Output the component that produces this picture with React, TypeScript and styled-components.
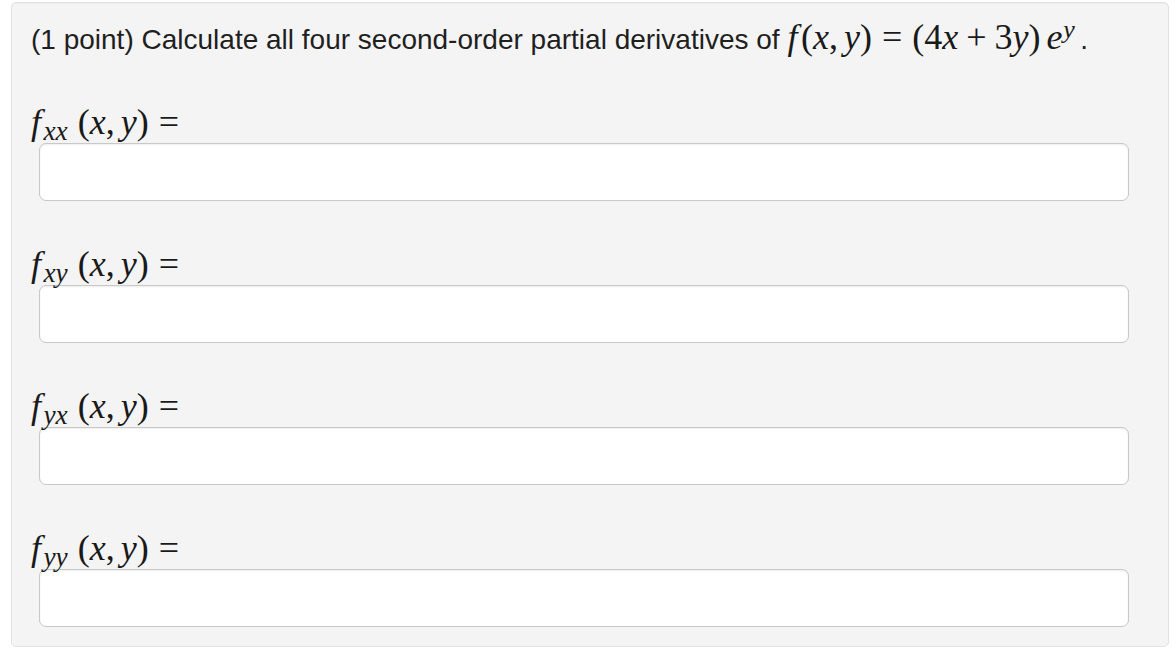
import React from "react";
import styled, { createGlobalStyle } from "styled-components";

const Global = createGlobalStyle`
  html, body { margin: 0; padding: 0; background: #ffffff; }
  body { font-family: "Liberation Sans", Arial, sans-serif; color: #1f1f1f; }
`;

const Page = styled.div`
  padding: 2px 7px 0 11px;
  width: 1158px;
`;

const Well = styled.div`
  box-sizing: border-box;
  width: 1158px;
  padding: 17px 19px 19px;
  background: #f4f4f4;
  border: 1px solid #e2e2e2;
  border-radius: 5px;
  box-shadow: inset 0 1px 1px rgba(0, 0, 0, 0.03);
`;

const Header = styled.div`
  height: 40px;
  line-height: 40px;
  font-size: 28px;
  margin-bottom: 46px;
  white-space: nowrap;
`;

const Math = styled.span`
  font-family: "Liberation Serif", "Times New Roman", serif;
  font-size: 36px;
  line-height: 0;
  color: #1a1a1a;
`;

const Mi = styled.i`
  font-style: italic;
`;

const Sub = styled.span`
  font-style: italic;
  font-size: 0.76em;
  line-height: 0;
  vertical-align: -0.23em;
  margin-left: 0.09em;
`;

const Sup = styled.span`
  font-style: italic;
  font-size: 0.72em;
  line-height: 0;
  vertical-align: 0.42em;
  margin-left: 0.03em;
`;

const Gap = styled.span<{ $em: number }>`
  display: inline-block;
  width: ${(p) => p.$em}em;
`;

const Item = styled.div<{ $last?: boolean }>`
  margin-bottom: ${(p) => (p.$last ? 0 : 47)}px;
`;

const Label = styled.div`
  height: 37px;
  line-height: 37px;
  font-size: 28px;
  white-space: nowrap;
`;

const Answer = styled.input`
  display: block;
  box-sizing: border-box;
  width: 1090px;
  height: 58px;
  margin: 0 0 0 8px;
  padding: 4px 10px;
  background: #ffffff;
  border: 1.5px solid #c8c8c8;
  border-radius: 7px;
  box-shadow: inset 0 1px 2px rgba(0, 0, 0, 0.07);
  font-size: 24px;
  outline: none;
`;

const XY = () => (
  <>
    (<Mi>x</Mi>,<Gap $em={0.167} />
    <Mi>y</Mi>)
  </>
);

const Eq = () => (
  <>
    <Gap $em={0.278} />=<Gap $em={0.278} />
  </>
);

const rows = ["xx", "xy", "yx", "yy"];

export default function App() {
  return (
    <>
      <Global />
      <Page>
        <Well>
          <Header>
            (1 point) Calculate all four second-order partial derivatives of{" "}
            <Math>
              <Mi>f</Mi>
              <Gap $em={0.1} />
              <XY />
              <Eq />
              (4<Mi>x</Mi>
              <Gap $em={0.222} />+<Gap $em={0.222} />3<Mi>y</Mi>)
              <Gap $em={0.167} />
              <Mi>e</Mi>
              <Sup>y</Sup>
            </Math>
            <Gap $em={0.2} />.
          </Header>
          {rows.map((r, i) => (
            <Item key={r} $last={i === rows.length - 1}>
              <Label>
                <Math>
                  <Mi>f</Mi>
                  <Sub>{r}</Sub>
                  <Gap $em={0.28} />
                  <XY />
                  <Eq />
                </Math>
              </Label>
              <Answer type="text" aria-label={`f${r}(x, y)`} />
            </Item>
          ))}
        </Well>
      </Page>
    </>
  );
}
